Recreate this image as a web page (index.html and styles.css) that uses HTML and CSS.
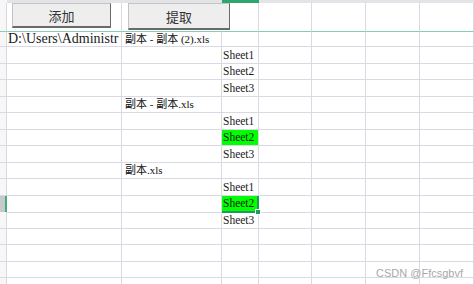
FILE: index.html
```html
<!DOCTYPE html>
<html lang="zh">
<head>
    <meta charset="UTF-8">
    <title>Sheet</title>
    <link rel="stylesheet" href="styles.css">
</head>
<body>
    <div class="sheet">
        <div class="row colhead"><div></div><div></div><div></div><div class="cur"></div><div></div><div></div><div></div><div></div></div>
        <div class="row r1"><div></div><div></div><div></div><div></div><div></div><div></div><div></div><div></div></div>
        <div class="row r2"><div></div><div class="path">D:\Users\Administr</div><div class="cn">副本 - 副本 (2).xls</div><div></div><div></div><div></div><div></div><div></div></div>
        <div class="row h17"><div></div><div></div><div></div><div class="sh">Sheet1</div><div></div><div></div><div></div><div></div></div>
        <div class="row"><div></div><div></div><div></div><div class="sh">Sheet2</div><div></div><div></div><div></div><div></div></div>
        <div class="row h17"><div></div><div></div><div></div><div class="sh">Sheet3</div><div></div><div></div><div></div><div></div></div>
        <div class="row"><div></div><div></div><div class="cn">副本 - 副本.xls</div><div></div><div></div><div></div><div></div><div></div></div>
        <div class="row h17"><div></div><div></div><div></div><div class="sh">Sheet1</div><div></div><div></div><div></div><div></div></div>
        <div class="row"><div></div><div></div><div></div><div class="sh green">Sheet2</div><div></div><div></div><div></div><div></div></div>
        <div class="row h17"><div></div><div></div><div></div><div class="sh">Sheet3</div><div></div><div></div><div></div><div></div></div>
        <div class="row"><div></div><div></div><div class="cn">副本.xls</div><div></div><div></div><div></div><div></div><div></div></div>
        <div class="row h17"><div></div><div></div><div></div><div class="sh">Sheet1</div><div></div><div></div><div></div><div></div></div>
        <div class="row"><div class="cur"></div><div></div><div></div><div class="sh green sel">Sheet2<span class="handle"></span></div><div></div><div></div><div></div><div></div></div>
        <div class="row h17"><div></div><div></div><div></div><div class="sh">Sheet3</div><div></div><div></div><div></div><div></div></div>
        <div class="row"><div></div><div></div><div></div><div></div><div></div><div></div><div></div><div></div></div>
        <div class="row h17"><div></div><div></div><div></div><div></div><div></div><div></div><div></div><div></div></div>
        <div class="row"><div></div><div></div><div></div><div></div><div></div><div></div><div></div><div></div></div>
        <div class="row h17"><div></div><div></div><div></div><div></div><div></div><div></div><div></div><div></div></div>
    </div>

    <button class="btn btn-add">添加</button>
    <button class="btn btn-get">提取</button>

    <div class="mark">CSDN @Ffcsgbvf</div>
</body>
</html>
```

FILE: styles.css
```css
* {
    box-sizing: border-box;
}
body {
    margin: 0;
    background: white;
    overflow: hidden;
    font-family: "Liberation Serif", "Noto Sans CJK SC", serif;
    color: #1a1a1a;
}
.sheet {
    width: 474px;
}
.row {
    display: grid;
    grid-template-columns: 7px 115px 100px 37px 53px 54px 54px 1fr;
    height: 16px;
}
.row.h17 {
    height: 17px;
}
.row > div {
    position: relative;
    border-right: 1px solid #d8d9e2;
    border-bottom: 1px solid #d8d9e2;
    white-space: nowrap;
    overflow: hidden;
    line-height: 15px;
}
.row > div:first-child {
    background: #f7f7f8;
}
.row > div:first-child.cur {
    background: #c9c9cc;
    border-right: 2px solid #3fae78;
}
.colhead {
    height: 3px;
}
.colhead > div {
    background: #e4e4e8;
    border-right: none;
    border-bottom: none;
}
.colhead > div.cur {
    background: #29a86a;
}
.r1 {
    height: 29px;
}
.r1 > div {
    border-bottom-color: #86ceac;
}
.r2 {
    height: 15px;
}
.r2 > div {
    line-height: 14px;
}
.path {
    font-size: 14px;
    padding-left: 1px;
}
.cn {
    font-size: 11px;
    padding-left: 3px;
    color: #111;
}
.sh {
    font-size: 11.5px;
    padding-left: 1px;
}
.h17 > div {
    line-height: 16px;
}
.row > div.green {
    background: #00ff00;
}
.row > div.sel {
    overflow: visible;
    border-right: 2px solid #1f9a5a;
    border-bottom: 2px solid #1f9a5a;
}
.handle {
    position: absolute;
    right: -4px;
    bottom: -4px;
    width: 6px;
    height: 6px;
    background: #1f9a5a;
    border: 1px solid white;
    z-index: 1;
}
.btn {
    position: absolute;
    top: 3px;
    height: 25px;
    background: #eeeeee;
    border: 1px solid #c4c4c4;
    border-right-color: #6a6a6a;
    border-bottom: 2px solid #6a6a6a;
    font-family: "Noto Sans CJK SC", sans-serif;
    font-size: 13px;
    color: #333;
    padding: 0;
}
.btn-add {
    left: 12px;
    width: 99px;
}
.btn-get {
    left: 128px;
    width: 102px;
    height: 27px;
}
.mark {
    position: absolute;
    right: 11px;
    bottom: 5px;
    font-family: "Liberation Sans", sans-serif;
    font-size: 11px;
    color: #a8a8a8;
}
```
